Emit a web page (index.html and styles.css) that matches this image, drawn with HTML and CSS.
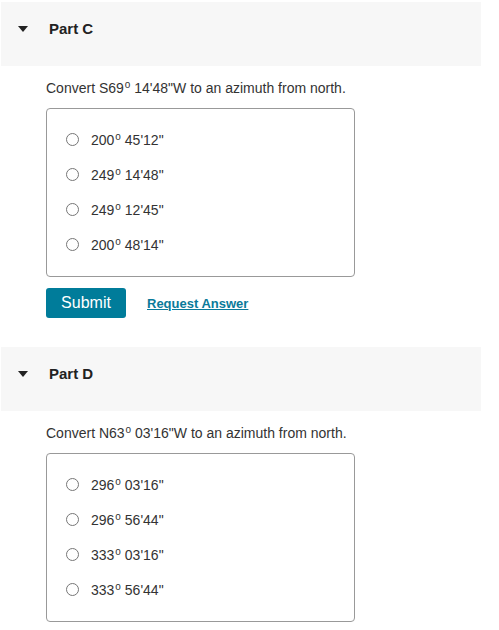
FILE: index.html
```html
<!DOCTYPE html>
<html lang="en">
<head>
  <meta charset="UTF-8">
  <meta name="viewport" content="width=device-width, initial-scale=1.0">
  <title>Parts C and D</title>
  <link rel="stylesheet" href="styles.css">
</head>
<body>

  <div class="part part-c">
    <div class="part-head">
      <span class="caret"></span>
      <h2>Part C</h2>
    </div>
    <div class="part-body">
      <p class="question">Convert S69<sup>o</sup> 14'48"W to an azimuth from north.</p>
      <div class="choices">
        <label class="choice"><input type="radio" name="pc"> <span>200<sup>o</sup> 45'12"</span></label>
        <label class="choice"><input type="radio" name="pc"> <span>249<sup>o</sup> 14'48"</span></label>
        <label class="choice"><input type="radio" name="pc"> <span>249<sup>o</sup> 12'45"</span></label>
        <label class="choice"><input type="radio" name="pc"> <span>200<sup>o</sup> 48'14"</span></label>
      </div>
      <div class="actions">
        <button class="submit">Submit</button>
        <a href="#" class="request">Request Answer</a>
      </div>
    </div>
  </div>

  <div class="part part-d">
    <div class="part-head">
      <span class="caret"></span>
      <h2>Part D</h2>
    </div>
    <div class="part-body">
      <p class="question">Convert N63<sup>o</sup> 03'16"W to an azimuth from north.</p>
      <div class="choices">
        <label class="choice"><input type="radio" name="pd"> <span>296<sup>o</sup> 03'16"</span></label>
        <label class="choice"><input type="radio" name="pd"> <span>296<sup>o</sup> 56'44"</span></label>
        <label class="choice"><input type="radio" name="pd"> <span>333<sup>o</sup> 03'16"</span></label>
        <label class="choice"><input type="radio" name="pd"> <span>333<sup>o</sup> 56'44"</span></label>
      </div>
    </div>
  </div>

</body>
</html>
```

FILE: styles.css
```css
body { margin: 0; background: #fff; font-family: "Liberation Sans", Arial, sans-serif; color: #333; font-size: 14px; }
.part-c { padding-top: 2px; }
.part-d { margin-top: 29px; }
.part-head { display: flex; align-items: flex-start; height: 64px; box-sizing: border-box; margin: 0 18px 0 1px; background: #f7f7f7; padding: 18px 0 0 17px; }
.part-head h2 { margin: 0 0 0 21px; font-size: 15px; line-height: 18px; font-weight: bold; color: #222; }
.caret { width: 0; height: 0; border-left: 5.5px solid transparent; border-right: 5.5px solid transparent; border-top: 6px solid #222; margin-top: 6px; }
.part-body { padding-left: 46px; }
.question { margin: 12px 0 10px; line-height: 20px; }
sup { font-size: 10px; vertical-align: 5px; line-height: 0; margin-left: 1px; }
.choices { width: 307px; border: 1px solid #999; border-radius: 4px; padding: 13px 0 14px; }
.choice { display: flex; align-items: center; height: 35px; padding-left: 19px; }
.choice input { margin: 0 12px 0 0; width: 13px; height: 13px; }
.actions { display: flex; align-items: center; margin-top: 11px; }
.submit { width: 80px; height: 30px; background: #007c9a; color: #fff; border: none; border-radius: 3px; font-family: "Liberation Sans", Arial, sans-serif; font-size: 16px; padding: 0; }
.request { margin-left: 21px; color: #0a7a9a; font-weight: bold; font-size: 13px; text-decoration: underline; }
```
